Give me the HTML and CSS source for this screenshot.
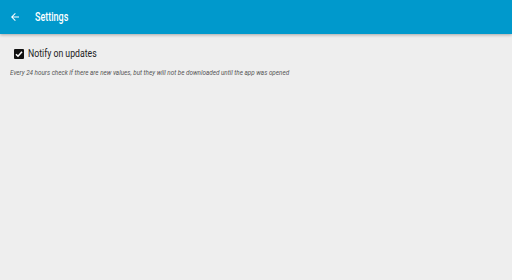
FILE: index.html
```html
<!DOCTYPE html>
<html>
  <head>
    <meta charset="utf-8" />
    <title>Settings</title>
    <link rel="stylesheet" href="styles.css">
  </head>
  <body>
    <div class="toolbar">
      <svg class="back" width="12" height="12" viewBox="0 0 24 24">
        <path d="M20 11H7.83l5.59-5.59L12 4l-8 8 8 8 1.41-1.41L7.83 13H20v-2z" fill="#fff"/>
      </svg>
      <span class="title">Settings</span>
    </div>
    <div class="content">
      <label class="pref">
        <span class="box">
          <svg width="10" height="10" viewBox="0 0 10 10">
            <path d="M2 5.2l2 2 4-4.4" stroke="#fff" stroke-width="1.6" fill="none"/>
          </svg>
        </span>
        <span class="label">Notify on updates</span>
      </label>
      <p class="summary"><span>Every 24 hours check if there are new values, but they will not be downloaded until the app was opened</span></p>
    </div>
  </body>
</html>
```
FILE: styles.css
```css
body {
  margin: 0;
  background: #eeeeee;
  font-family: Roboto, "Noto Sans", sans-serif;
}
.toolbar {
  height: 34px;
  background: #0099cc;
  display: flex;
  align-items: center;
  padding-left: 9px;
  box-shadow: 0 1px 3px rgba(0, 0, 0, 0.3);
}
.back {
  margin-right: 14px;
}
.title {
  display: inline-block;
  color: #fff;
  font-size: 12px;
  font-weight: 500;
  transform: scaleX(0.75);
  transform-origin: left;
}
.content {
  padding: 14px 10px 0 14px;
}
.pref {
  display: flex;
  align-items: center;
}
.box {
  width: 10px;
  height: 10px;
  background: #111;
  border-radius: 1px;
  display: flex;
  align-items: center;
  justify-content: center;
  margin-right: 4px;
}
.label {
  display: inline-block;
  font-size: 10px;
  color: #222;
  transform: scaleX(0.87);
  transform-origin: left;
}
.summary {
  margin: 9px 0 0 -4px;
  font-size: 8px;
  font-style: italic;
  color: #555;
  white-space: nowrap;
}
.summary span {
  display: inline-block;
  transform: scaleX(0.79);
  transform-origin: left;
}
```
